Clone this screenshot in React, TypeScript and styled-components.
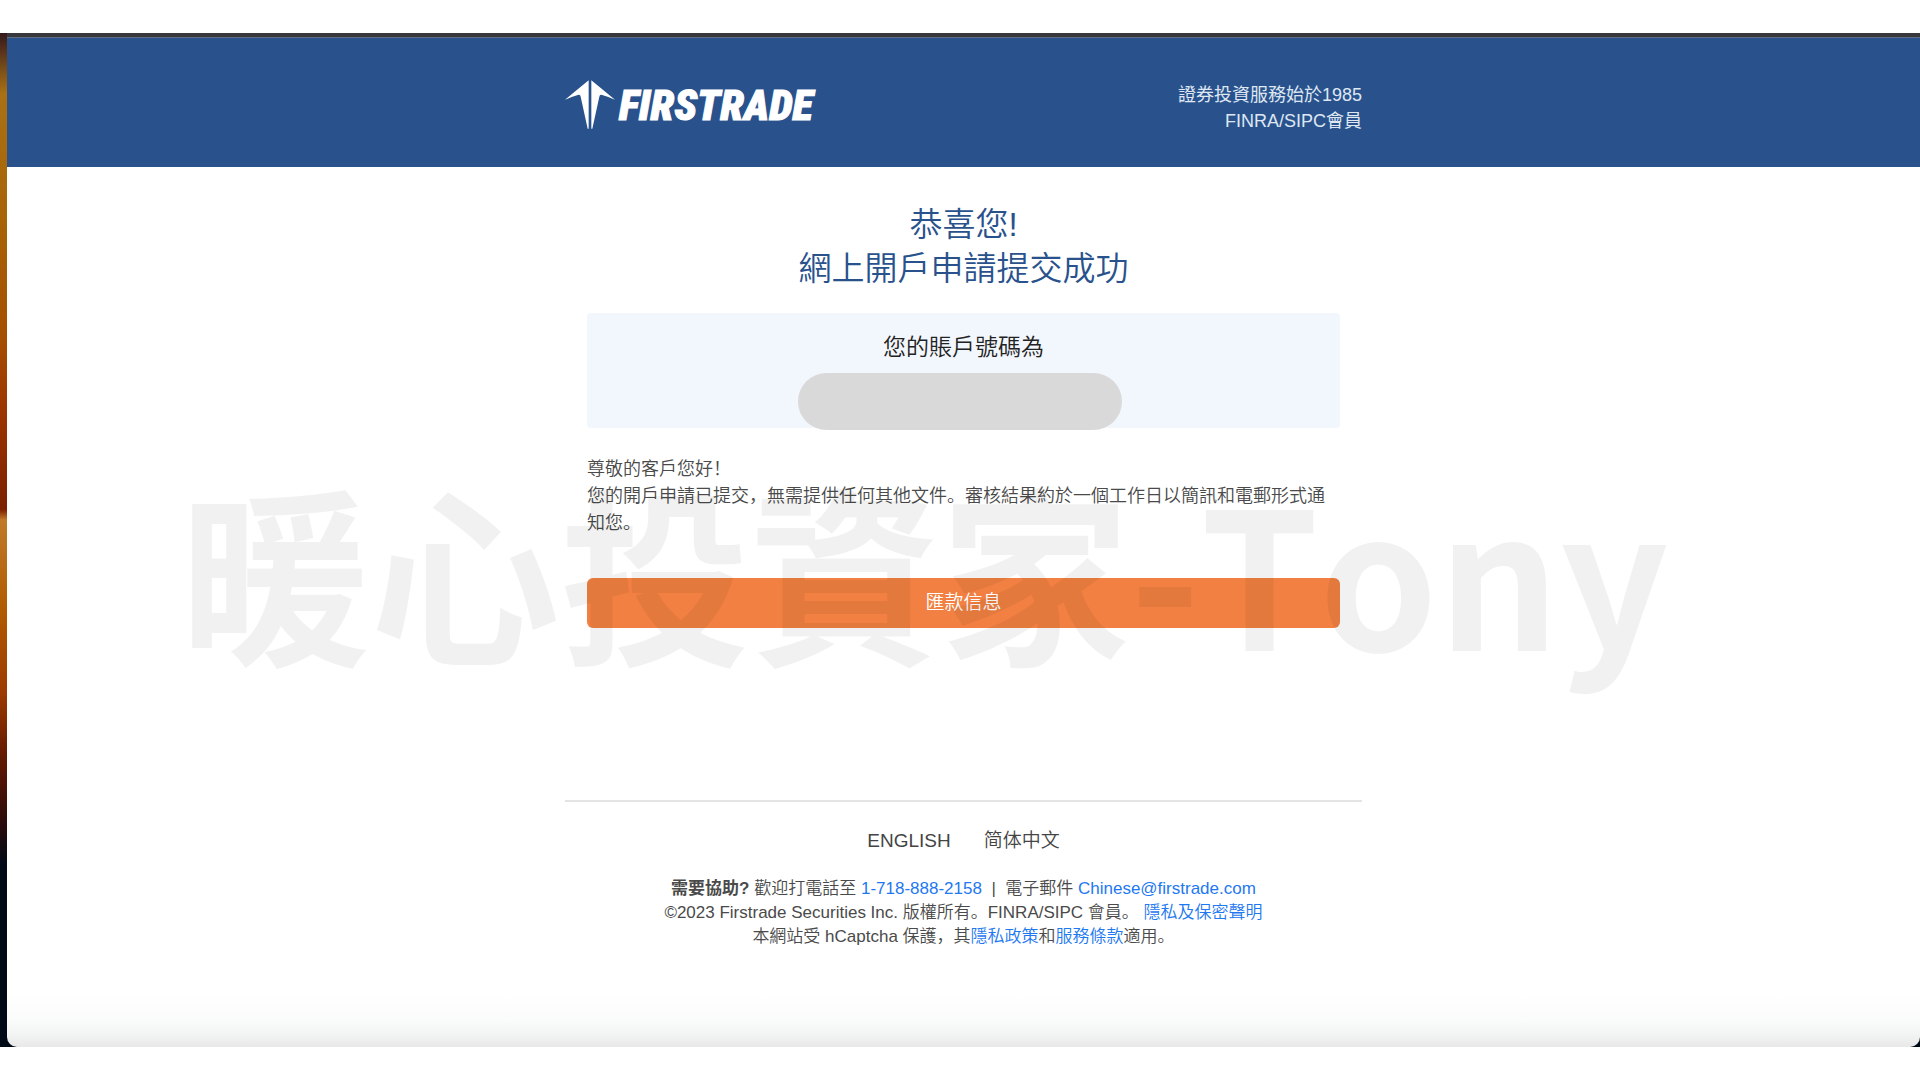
import React from "react";
import styled, { createGlobalStyle } from "styled-components";

const sans = `"Liberation Sans", "Noto Sans CJK SC", sans-serif`;

const GlobalStyle = createGlobalStyle`
  * { box-sizing: border-box; }
  body { margin: 0; background: #fff; font-family: ${sans}; color: #4a4a4a; }
  h1, p { margin: 0; font-weight: 400; }
`;

const Page = styled.div`
  min-height: 100vh;
  display: flex;
  flex-direction: column;
  padding: 33px 0;
`;

const Desktop = styled.div`
  position: relative;
  flex: 1;
  display: flex;
  padding-left: 7px;
  overflow: hidden;
  background: linear-gradient(
    180deg,
    #34181c 0%, #6e4519 3%, #a97114 6%, #a86406 18%, #a54e00 30%,
    #9c3600 37%, #7c2000 47%, #c07a28 48%, #b05a00 57%, #9c3a00 65%,
    #661a00 71%, #2a0a0c 78%, #000a16 82%, #000a16 100%
  );
`;

const Window = styled.div`
  flex: 1;
  display: flex;
  flex-direction: column;
  border-top: 4px solid #38383c;
  border-radius: 0 0 10px 10px;
  overflow: hidden;
  background: linear-gradient(0deg, #e8e8e8 0, #f2f3f3 12px, #fafbfb 26px, #fff 52px);
`;

const Header = styled.header`
  background: #29528d;
  border-top: 1px solid #5f6f86;
  padding: 42px 24px 37px;
`;

const Container = styled.div`
  max-width: 797px;
  margin: 0 auto;
`;

const HeaderRow = styled(Container)`
  display: flex;
  align-items: center;
  justify-content: space-between;
  height: 50px;
`;

const Brand = styled.a`
  display: flex;
  align-items: center;
  gap: 4px;
  color: #fff;
  text-decoration: none;
`;

const BrandName = styled.span`
  font: italic 900 43px/50px "Roboto Condensed", "Liberation Sans Narrow", sans-serif;
  -webkit-text-stroke: 1px #fff;
`;

const Tagline = styled.p`
  padding-top: 5px;
  text-align: right;
  font-size: 18px;
  line-height: 26px;
  color: #dfe7f2;
`;

const Main = styled(Container).attrs({ as: "main" })`
  width: 100%;
  padding: 36px 22px 0;
`;

const Title = styled.h1`
  text-align: center;
  font-size: 33px;
  line-height: 44px;
  font-weight: 350;
  color: #29528d;
`;

const AccountBox = styled.section`
  position: relative;
  height: 115px;
  margin-top: 22px;
  padding-top: 18px;
  border-radius: 4px;
  background: #f2f6fd;
  text-align: center;
  font-size: 23px;
  line-height: 32px;
  font-weight: 350;
  color: #222;
`;

const Redaction = styled.div`
  position: absolute;
  top: 60px;
  left: 50%;
  width: 324px;
  height: 57px;
  margin-left: -166px;
  border-radius: 29px;
  background: #d9d9d9;
`;

const Message = styled.p`
  margin-top: 28px;
  font-size: 18px;
  line-height: 27px;
  font-weight: 350;
`;

const PrimaryButton = styled.button`
  display: block;
  width: 100%;
  height: 50px;
  margin-top: 41px;
  padding: 0 0 6px;
  border: 0;
  border-radius: 6px;
  background: #f28042;
  color: #fff;
  font-family: ${sans};
  font-size: 19px;
  font-weight: 350;
`;

const Footer = styled.footer`
  width: 100%;
  max-width: 797px;
  margin: 172px auto 0;
  padding: 25px 0 80px;
  border-top: 2px solid #e4e4e4;
  text-align: center;
  font-weight: 350;
`;

const Languages = styled.nav`
  display: flex;
  justify-content: center;
  gap: 33px;
  font-size: 19px;
  line-height: 28px;
`;

const LanguageLink = styled.a`
  color: #444;
  text-decoration: none;
`;

const Legal = styled.div`
  margin-top: 22px;
  font-size: 17px;
  line-height: 24px;

  p { font-weight: 350; }
`;

const Link = styled.a`
  color: #1e78f0;
  text-decoration: none;
`;

const Watermark = styled.div`
  position: absolute;
  left: 180px;
  top: 396px;
  font: 700 190px/280px "Noto Sans CJK TC", sans-serif;
  font-kerning: none;
  color: rgba(0, 0, 0, 0.055);
  white-space: nowrap;
  pointer-events: none;
`;

function LogoMark() {
  return (
    <svg width="50" height="50" viewBox="0 0 150 150" fill="#fff" aria-hidden="true">
      <path d="M71 1 L0 59 Q24 48 41 44 Q46 43 47 50 L68 146 L71 146 Z" />
      <path d="M79 1 L150 59 Q126 48 109 44 Q104 43 103 50 L82 146 L79 146 Z" />
    </svg>
  );
}

export default function App() {
  return (
    <>
      <GlobalStyle />
      <Page lang="zh-CN">
        <Desktop>
          <Window>
            <Header>
              <HeaderRow>
                <Brand href="#">
                  <LogoMark />
                  <BrandName>FIRSTRADE</BrandName>
                </Brand>
                <Tagline>
                  證券投資服務始於1985
                  <br />
                  FINRA/SIPC會員
                </Tagline>
              </HeaderRow>
            </Header>
            <Main>
              <Title>
                恭喜您!
                <br />
                網上開戶申請提交成功
              </Title>
              <AccountBox>
                您的賬戶號碼為
                <Redaction />
              </AccountBox>
              <Message>
                尊敬的客戶您好！
                <br />
                您的開戶申請已提交，無需提供任何其他文件。審核結果約於一個工作日以簡訊和電郵形式通知您。
              </Message>
              <PrimaryButton type="button">匯款信息</PrimaryButton>
            </Main>
            <Footer>
              <Languages>
                <LanguageLink href="#">ENGLISH</LanguageLink>
                <LanguageLink href="#">简体中文</LanguageLink>
              </Languages>
              <Legal>
                <p>
                  <b>需要協助?</b> 歡迎打電話至 <Link href="tel:1-718-888-2158">1-718-888-2158</Link>
                  {" \u00a0|\u00a0 "}電子郵件 <Link href="mailto:Chinese@firstrade.com">Chinese@firstrade.com</Link>
                </p>
                <p>
                  ©2023 Firstrade Securities Inc. 版權所有。FINRA/SIPC 會員。 <Link href="#">隱私及保密聲明</Link>
                </p>
                <p>
                  本網站受 hCaptcha 保護，其<Link href="#">隱私政策</Link>和<Link href="#">服務條款</Link>適用。
                </p>
              </Legal>
            </Footer>
          </Window>
          <Watermark lang="zh-Hant">暖心投資家-Tony</Watermark>
        </Desktop>
      </Page>
    </>
  );
}
